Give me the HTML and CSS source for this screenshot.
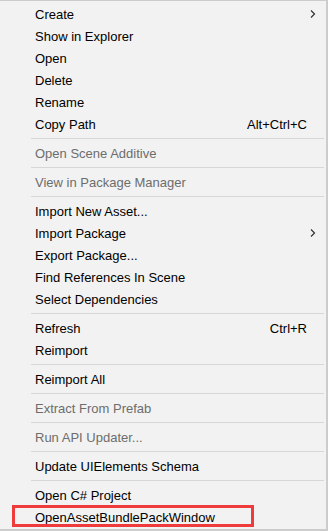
FILE: index.html
```html
<!DOCTYPE html>
<html>
<head>
<meta charset="utf-8">
<link rel="stylesheet" href="styles.css">
</head>
<body>
<div class="menu">
  <div class="item"><span class="label">Create</span><svg class="arrow" width="6" height="8" viewBox="0 0 6 8"><path d="M1 0.5 L4.5 4 L1 7.5" fill="none" stroke="#333" stroke-width="1.2"/></svg></div>
  <div class="item"><span class="label">Show in Explorer</span></div>
  <div class="item"><span class="label">Open</span></div>
  <div class="item"><span class="label">Delete</span></div>
  <div class="item"><span class="label">Rename</span></div>
  <div class="item"><span class="label">Copy Path</span><span class="shortcut">Alt+Ctrl+C</span></div>
  <div class="sep"></div>
  <div class="item disabled"><span class="label">Open Scene Additive</span></div>
  <div class="sep"></div>
  <div class="item disabled"><span class="label">View in Package Manager</span></div>
  <div class="sep"></div>
  <div class="item"><span class="label">Import New Asset...</span></div>
  <div class="item"><span class="label">Import Package</span><svg class="arrow" width="6" height="8" viewBox="0 0 6 8"><path d="M1 0.5 L4.5 4 L1 7.5" fill="none" stroke="#333" stroke-width="1.2"/></svg></div>
  <div class="item"><span class="label">Export Package...</span></div>
  <div class="item"><span class="label">Find References In Scene</span></div>
  <div class="item"><span class="label">Select Dependencies</span></div>
  <div class="sep"></div>
  <div class="item"><span class="label">Refresh</span><span class="shortcut">Ctrl+R</span></div>
  <div class="item"><span class="label">Reimport</span></div>
  <div class="sep"></div>
  <div class="item"><span class="label">Reimport All</span></div>
  <div class="sep"></div>
  <div class="item disabled"><span class="label">Extract From Prefab</span></div>
  <div class="sep"></div>
  <div class="item disabled"><span class="label">Run API Updater...</span></div>
  <div class="sep"></div>
  <div class="item"><span class="label">Update UIElements Schema</span></div>
  <div class="sep"></div>
  <div class="item"><span class="label">Open C# Project</span></div>
  <div class="item highlighted"><span class="label">OpenAssetBundlePackWindow</span></div>
</div>
</body>
</html>
```

FILE: styles.css
```css
html, body {
  margin: 0;
  padding: 0;
  background: #ffffff;
}

.menu {
  box-sizing: border-box;
  width: 328px;
  height: 531px;
  background: #f2f2f2;
  border-top: 1px solid #cccccc;
  border-right: 2px solid #cccccc;
  border-bottom: 2px solid #cccccc;
  padding: 2px 0 1px 0;
  font-family: "Liberation Sans", Arial, sans-serif;
  font-size: 13px;
  color: #000000;
}

.item {
  position: relative;
  display: flex;
  align-items: center;
  height: 22px;
  padding: 0 19px 0 35px;
}

.item .label {
  flex: 1;
  white-space: nowrap;
}

.item .shortcut {
  white-space: nowrap;
}

.item .arrow {
  position: absolute;
  right: 10px;
  top: 7px;
}

.item.disabled {
  color: #6d6d6d;
}

.sep {
  height: 7px;
  display: flex;
  align-items: center;
  padding: 0 2px 0 31px;
}

.sep::before {
  content: "";
  display: block;
  flex: 1;
  height: 1px;
  background: #d7d7d7;
}

.item.highlighted::after {
  content: "";
  position: absolute;
  left: 12px;
  top: -1px;
  width: 236px;
  height: 16px;
  border: 3px solid #ef3b3b;
}
```
